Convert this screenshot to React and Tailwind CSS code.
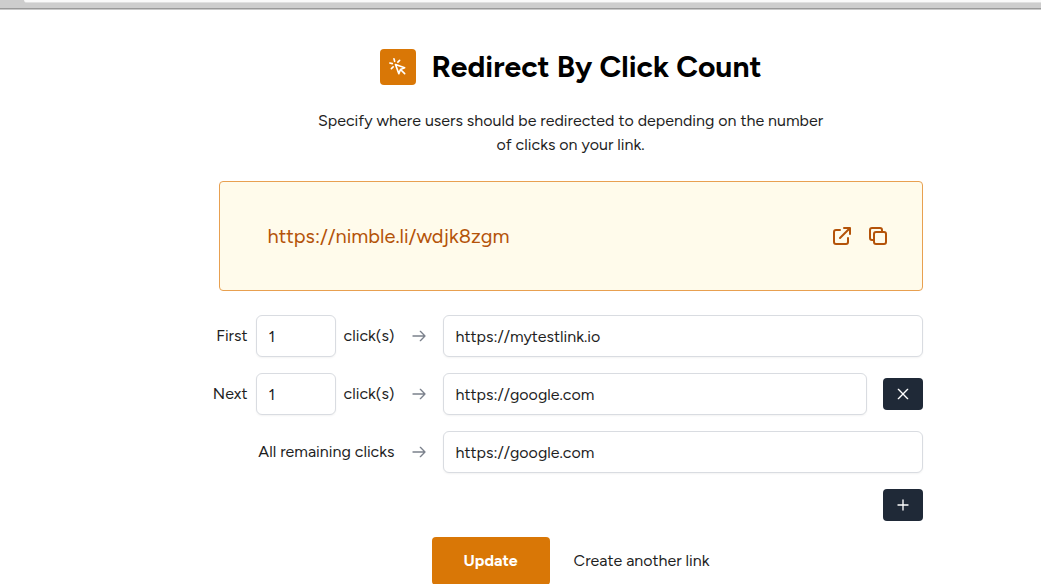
import React, { useState } from 'react';

const inputStyle =
  'h-[42px] rounded-md border border-[#d9dce1] bg-white px-3 text-[#1f1f1f] shadow-xs focus:outline-none focus:border-amber-500';
const buttonStyle =
  'flex h-8 w-10 shrink-0 items-center justify-center rounded-sm bg-[#1f2937] text-white hover:bg-gray-700';

function Icon({ d, className, strokeWidth = 2 }) {
  return (
    <svg
      className={className}
      viewBox="0 0 24 24"
      fill="none"
      stroke="currentColor"
      strokeWidth={strokeWidth}
      strokeLinecap="round"
      strokeLinejoin="round"
      aria-hidden="true"
    >
      <path d={d} />
    </svg>
  );
}

function Arrow() {
  return (
    <span className="flex w-12 shrink-0 justify-center text-[#7b818c]">
      <Icon className="size-4" strokeWidth={2} d="M3 12h18M14 5l7 7-7 7" />
    </span>
  );
}

function ClickRow({ id, label, step, onChange, onRemove }) {
  return (
    <div className="flex items-center">
      <div className="flex w-[190px] shrink-0 items-center gap-2">
        <label htmlFor={`${id}-clicks`} className="flex w-11 justify-end whitespace-nowrap">
          {label}
        </label>
        <input
          id={`${id}-clicks`}
          className={`${inputStyle} w-20`}
          value={step.clicks}
          onChange={(e) => onChange({ ...step, clicks: e.target.value })}
        />
        <label htmlFor={`${id}-url`} className="flex-1 whitespace-nowrap">
          click(s)
        </label>
      </div>
      <Arrow />
      <input
        id={`${id}-url`}
        className={`${inputStyle} min-w-0 flex-1`}
        value={step.url}
        onChange={(e) => onChange({ ...step, url: e.target.value })}
      />
      {onRemove && (
        <button type="button" aria-label="Remove" className={`${buttonStyle} ml-4`} onClick={onRemove}>
          <Icon className="size-4" strokeWidth={2} d="M5 19L19 5M5 5l14 14" />
        </button>
      )}
    </div>
  );
}

function App() {
  const [steps, setSteps] = useState([
    { clicks: '1', url: 'https://mytestlink.io' },
    { clicks: '1', url: 'https://google.com' },
  ]);
  const [rest, setRest] = useState('https://google.com');
  const link = 'https://nimble.li/wdjk8zgm';

  const updateStep = (index, step) => {
    setSteps(steps.map((s, i) => (i === index ? step : s)));
  };

  return (
    <div className="h-screen overflow-hidden bg-white font-['Figtree','Inter',sans-serif] text-base leading-6 text-[#1f1f1f]">
      <div className="h-[10px] border-b border-[#c8c8c8] bg-[#cdcdcd]">
        <div className="h-[9px] border-b border-[#999999]">
          <div className="ml-6 h-[3px] rounded-bl-sm border-b border-[#e0e0e0] bg-[#fafafa]" />
        </div>
      </div>

      <main className="pt-[39px] pl-[100px]">
        <div className="mx-auto max-w-[704px]">
          <div className="flex items-center justify-center gap-4">
            <span className="flex size-9 items-center justify-center rounded-sm bg-[#d97706] text-white">
              <Icon
                className="size-5"
                d="M15 15l-2 5L9 9l11 4-5 2zm0 0l5 5M7.188 2.239l.777 2.897M5.136 7.965l-2.898-.777M13.95 4.05l-2.122 2.122m-5.657 5.656l-2.12 2.122"
              />
            </span>
            <h1 className="text-3xl leading-9 font-bold text-black">Redirect By Click Count</h1>
          </div>

          <p className="mx-auto mt-6 max-w-[512px] text-center">
            Specify where users should be redirected to depending on the number of clicks on your link.
          </p>

          <div className="mt-6 flex h-[110px] items-center justify-between rounded-sm border border-[#e8a050] bg-[#fffbeb] pr-8 pl-12 text-[#b45309]">
            <a href={link} className="text-xl">
              {link}
            </a>
            <div className="flex gap-3">
              <a href={link} aria-label="Open link">
                <Icon
                  className="size-6"
                  d="M10 6H6a2 2 0 00-2 2v10a2 2 0 002 2h10a2 2 0 002-2v-4M14 4h6m0 0v6m0-6L10 14"
                />
              </a>
              <button type="button" aria-label="Copy link" onClick={() => navigator.clipboard.writeText(link)}>
                <Icon
                  className="size-6"
                  d="M8 16H6a2 2 0 01-2-2V6a2 2 0 012-2h8a2 2 0 012 2v2m-6 12h8a2 2 0 002-2v-8a2 2 0 00-2-2h-8a2 2 0 00-2 2v8a2 2 0 002 2z"
                />
              </button>
            </div>
          </div>

          <form className="mt-6 -ml-[14px] flex flex-col gap-4" onSubmit={(e) => e.preventDefault()}>
            {steps.map((step, index) => (
              <ClickRow
                key={index}
                id={`step-${index}`}
                label={index === 0 ? 'First' : 'Next'}
                step={step}
                onChange={(s) => updateStep(index, s)}
                onRemove={index === 0 ? null : () => setSteps(steps.filter((_, i) => i !== index))}
              />
            ))}
            <div className="flex items-center">
              <label htmlFor="rest" className="w-[190px] shrink-0 text-right">
                All remaining clicks
              </label>
              <Arrow />
              <input
                id="rest"
                className={`${inputStyle} min-w-0 flex-1`}
                value={rest}
                onChange={(e) => setRest(e.target.value)}
              />
            </div>
            <div className="flex justify-end">
              <button
                type="button"
                aria-label="Add"
                className={buttonStyle}
                onClick={() => setSteps([...steps, { clicks: '1', url: '' }])}
              >
                <Icon className="size-4" strokeWidth={2} d="M12 4.5v15m7.5-7.5h-15" />
              </button>
            </div>
            <div className="flex items-center justify-center gap-6 pl-[14px]">
              <button
                type="submit"
                className="h-12 rounded-sm bg-[#d97706] px-8 font-bold text-white hover:bg-amber-700"
              >
                Update
              </button>
              <a href="#new">Create another link</a>
            </div>
          </form>
        </div>
      </main>
    </div>
  );
}

export default App;
